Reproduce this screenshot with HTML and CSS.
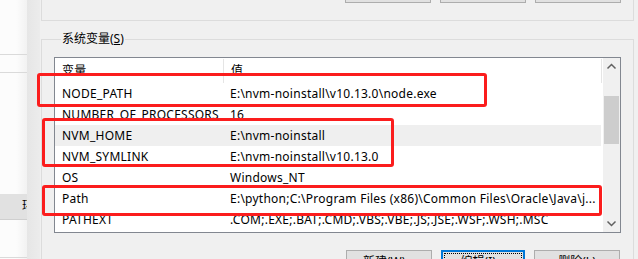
FILE: index.html
```html
<!DOCTYPE html>
<html lang="zh-CN">
<head>
    <meta charset="UTF-8">
    <title>环境变量</title>
    <link rel="stylesheet" href="styles.css">
</head>
<body>
    <div class="screen">
        <!-- window behind the dialog, mostly hidden -->
        <div class="behind">
            <div class="behind-rule first"></div>
            <div class="behind-rule second"></div>
            <div class="behind-btn">环境变量(N)...</div>
            <div class="behind-rule last"></div>
        </div>
        <div class="shadow"></div>

        <div class="dialog">
            <div class="user-group">
                <div class="btn-row">
                    <div class="btn stub"></div>
                    <div class="btn stub"></div>
                    <div class="btn stub"></div>
                </div>
            </div>

            <fieldset class="sys-group">
                <legend>系统变量(<u>S</u>)</legend>
                <div class="listview">
                    <div class="lv-body">
                        <div class="lv-header">
                            <div class="col-name">变量</div>
                            <div class="col-value">值</div>
                        </div>
                        <div class="lv-row"><div class="col-name">NODE_PATH</div><div class="col-value">E:\nvm-noinstall\v10.13.0\node.exe</div></div>
                        <div class="lv-row"><div class="col-name">NUMBER_OF_PROCESSORS</div><div class="col-value">16</div></div>
                        <div class="lv-row hover"><div class="col-name">NVM_HOME</div><div class="col-value">E:\nvm-noinstall</div></div>
                        <div class="lv-row"><div class="col-name">NVM_SYMLINK</div><div class="col-value">E:\nvm-noinstall\v10.13.0</div></div>
                        <div class="lv-row"><div class="col-name">OS</div><div class="col-value">Windows_NT</div></div>
                        <div class="lv-row"><div class="col-name">Path</div><div class="col-value">E:\python;C:\Program Files (x86)\Common Files\Oracle\Java\j...</div></div>
                        <div class="lv-row"><div class="col-name">PATHEXT</div><div class="col-value">.COM;.EXE;.BAT;.CMD;.VBS;.VBE;.JS;.JSE;.WSF;.WSH;.MSC</div></div>
                    </div>
                    <div class="scrollbar">
                        <svg class="arrow" width="17" height="17" viewBox="0 0 17 17"><polyline points="4.5,10.5 8.5,6.5 12.5,10.5" fill="none" stroke="#606060" stroke-width="1.5"/></svg>
                        <div class="track">
                            <div class="thumb"></div>
                        </div>
                        <svg class="arrow" width="17" height="17" viewBox="0 0 17 17"><polyline points="4.5,6.5 8.5,10.5 12.5,6.5" fill="none" stroke="#606060" stroke-width="1.5"/></svg>
                    </div>
                </div>
                <div class="btn-row bottom">
                    <div class="btn">新建(<u>W</u>)...</div>
                    <div class="btn focused">编辑(<u>I</u>)...</div>
                    <div class="btn">删除(<u>L</u>)</div>
                </div>
            </fieldset>
        </div>

        <!-- red annotation boxes drawn over the screenshot -->
        <div class="mark mark-node"></div>
        <div class="mark mark-nvm"></div>
        <div class="mark mark-path"></div>
    </div>
</body>
</html>
```

FILE: styles.css
```css
body {
    margin: 0;
    background-color: #f0f0f0;
    font-family: "Noto Sans", "Noto Sans CJK SC", sans-serif;
    font-size: 12px;
    color: #000;
}

.screen {
    position: relative;
    display: flex;
    width: 638px;
    height: 259px;
    overflow: hidden;
}

/* Window underneath */
.behind {
    width: 27px;
    flex-shrink: 0;
    background: linear-gradient(to right, #fcfcfc 60%, #f2f2f2);
    display: flex;
    flex-direction: column;
}

.behind-rule {
    height: 1px;
    flex-shrink: 0;
    background-color: #dadada;
}

.behind-rule.first {
    margin-top: 54px;
}

.behind-rule.second {
    margin-top: 17px;
}

.behind-rule.last {
    margin-top: 37px;
}

.behind-btn {
    margin-top: 121px;
    height: 25px;
    flex-shrink: 0;
    background-color: #e1e1e1;
    border-bottom: 1px solid #cfcfcf;
    padding-left: 22px;
    line-height: 24px;
    white-space: nowrap;
    overflow: hidden;
}

.shadow {
    width: 13px;
    flex-shrink: 0;
    background: linear-gradient(to right, #e6e6e6, #ececec);
}

/* Dialog */
.dialog {
    flex: 1;
    display: flex;
    flex-direction: column;
    padding: 0 4px 0 1px;
}

.user-group {
    height: 20px;
    flex-shrink: 0;
    border: 1px solid #dcdcdc;
    border-top: none;
    padding-right: 12px;
}

.btn-row {
    display: flex;
    justify-content: flex-end;
    gap: 9px;
}

.btn {
    width: 84px;
    height: 21px;
    background-color: #e1e1e1;
    border: 1px solid #adadad;
    text-align: center;
    line-height: 21px;
    white-space: nowrap;
}

.btn.stub {
    height: 2px;
    border-top: none;
}

.btn.focused {
    position: relative;
    border: 2px solid #0078d7;
    width: 80px;
    height: 19px;
    line-height: 19px;
}

.btn.focused::after {
    content: "";
    position: absolute;
    inset: 1px;
    border: 1px dotted #000;
}

.sys-group {
    margin: 11px 0 0 0;
    padding: 11px 12px 0 12px;
    border: 1px solid #dcdcdc;
    min-width: 0;
    flex-shrink: 0;
}

.sys-group legend {
    margin-left: 7px;
    padding: 0 1px;
    line-height: 14px;
    color: #000;
}

.listview {
    display: flex;
    height: 174px;
    border: 1px solid #828790;
    background-color: #fff;
}

.lv-body {
    flex: 1;
    min-width: 0;
    letter-spacing: 0.25px;
}

.lv-header {
    display: flex;
    height: 25px;
    align-items: center;
}

.lv-header .col-name {
    border-right: 1px solid #e5e5e5;
    height: 24px;
    line-height: 24px;
}

.lv-header .col-value {
    flex: 1;
    border-right: 1px solid #e5e5e5;
    height: 24px;
    line-height: 24px;
    margin-right: 1px;
}

.lv-row {
    display: flex;
    height: 21px;
    line-height: 21px;
    white-space: nowrap;
}

.lv-row.hover {
    background-color: #efefef;
    margin-right: 2px;
}

.col-name {
    width: 161px;
    padding-left: 7px;
    overflow: hidden;
    flex-shrink: 0;
}

.col-value {
    padding-left: 7px;
    overflow: hidden;
}

.scrollbar {
    width: 17px;
    flex-shrink: 0;
    background-color: #f0f0f0;
    display: flex;
    flex-direction: column;
}

.arrow {
    display: block;
    flex-shrink: 0;
}

.track {
    flex: 1;
    padding-top: 21px;
}

.thumb {
    height: 48px;
    margin: 0 1px;
    background-color: #cdcdcd;
}

.btn-row.bottom {
    margin-top: 17px;
    padding-right: 1px;
}

/* Annotations */
.mark {
    position: absolute;
    border: 3px solid #fb1d1d;
    border-radius: 3px;
    box-sizing: border-box;
}

.mark-node {
    left: 37px;
    top: 73px;
    width: 450px;
    height: 34px;
}

.mark-nvm {
    left: 42px;
    top: 118px;
    width: 352px;
    height: 49px;
}

.mark-path {
    left: 42px;
    top: 185px;
    width: 560px;
    height: 31px;
}
```
